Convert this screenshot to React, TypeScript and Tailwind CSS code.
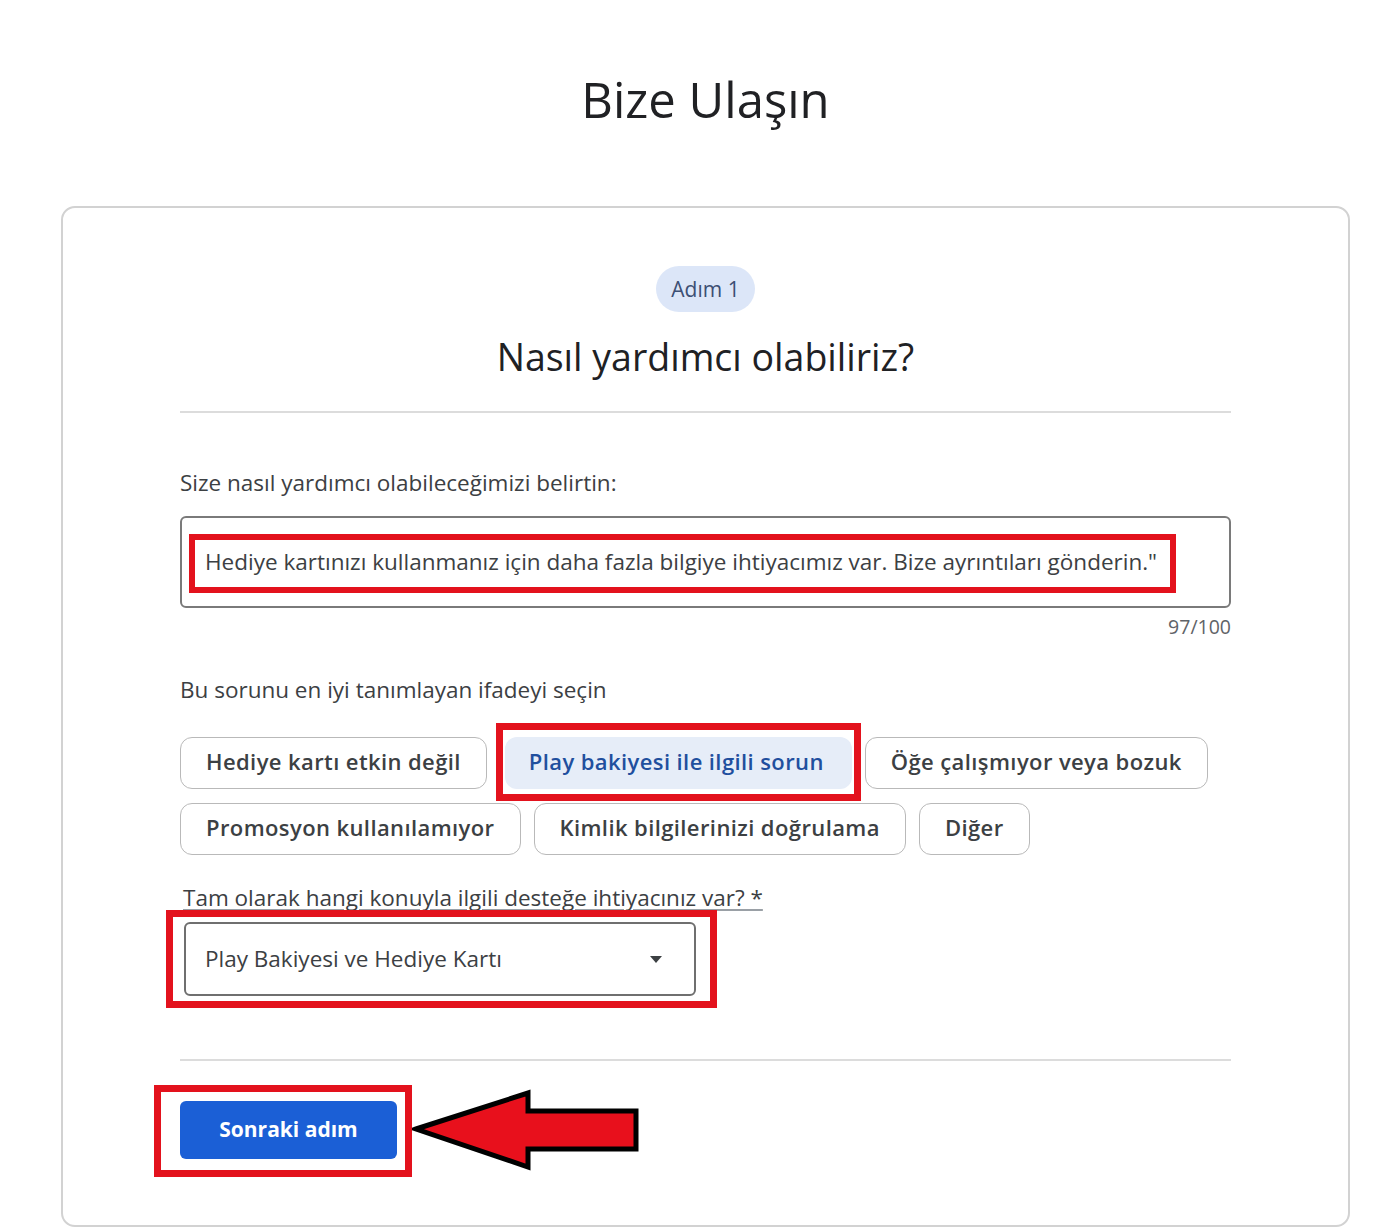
import React from "react";

const chipsTop = ["Hediye kartı etkin değil", "Play bakiyesi ile ilgili sorun", "Öğe çalışmıyor veya bozuk"];
const chipsBottom = ["Promosyon kullanılamıyor", "Kimlik bilgilerinizi doğrulama", "Diğer"];

function Chip({ label, selected }: { label: string; selected?: boolean }) {
  if (selected) {
    return (
      <div className="relative ml-[5px]">
        <div className="h-[52px] pl-[24px] pr-[28px] pb-[3px] flex items-center rounded-[12px] bg-[#e6edf8] text-[#1f4f9e] text-[22px] font-semibold tracking-[0.4px]">
          {label}
        </div>
        {/* highlight frame */}
        <div className="absolute -left-[9px] -right-[9px] -top-[14px] -bottom-[12px] border-[7px] border-[#e3121d] pointer-events-none" />
      </div>
    );
  }
  return (
    <div className="h-[52px] px-[25px] pb-[3px] flex items-center rounded-[12px] border-[1.5px] border-[#b9b9b9] bg-white text-[#3c4043] text-[22px] font-semibold tracking-[0.4px]">
      {label}
    </div>
  );
}

function Divider() {
  return <div className="h-[2px] bg-[#dcdcdc]" />;
}

export default function App() {
  return (
    <div className="min-h-[1232px] bg-white font-['Open_Sans',sans-serif] text-[#202124] pb-[6px]">
      <h1 className="ml-[61px] w-[1289px] pt-[69px] text-center text-[49px] leading-[60px] text-[#202124]">
        Bize Ulaşın
      </h1>

      <div className="ml-[61px] mt-[77px] w-[1289px] rounded-[14px] border-2 border-[#d2d2d2] px-[117px] pt-[58px] pb-[66px]">
        <div className="flex justify-center">
          <span className="h-[46px] px-[15px] rounded-full bg-[#dce6f8] text-[#3c4f74] text-[21px] leading-[46px]">
            Adım 1
          </span>
        </div>
        <h2 className="mt-[21px] text-center text-[37.5px] leading-[48px] text-[#202124]">
          Nasıl yardımcı olabiliriz?
        </h2>

        <div className="mt-[30px]">
          <Divider />
        </div>

        <p className="mt-[56px] text-[22.5px] leading-[28px] text-[#3c4043]">
          Size nasıl yardımcı olabileceğimizi belirtin:
        </p>

        <div className="relative mt-[19px] h-[92px] rounded-[6px] border-2 border-[#7a7a7a] flex items-center pl-[23px]">
          <span className="text-[22.5px] text-[#3c4043]">
            Hediye kartınızı kullanmanız için daha fazla bilgiye ihtiyacımız var. Bize ayrıntıları gönderin."
          </span>
          <div className="absolute left-[7px] top-[16px] w-[987px] h-[59px] border-[6px] border-[#e3121d] pointer-events-none" />
        </div>
        <div className="mt-[8px] text-right text-[19.5px] leading-[22px] text-[#5f6368]">97/100</div>

        <p className="mt-[38px] text-[22.5px] leading-[28px] text-[#3c4043]">
          Bu sorunu en iyi tanımlayan ifadeyi seçin
        </p>

        <div className="mt-[33px] flex flex-col gap-[14px]">
          <div className="flex gap-x-[13px]">
            {chipsTop.map((c, i) => (
              <Chip key={c} label={c} selected={i === 1} />
            ))}
          </div>
          <div className="flex gap-x-[13px]">
            {chipsBottom.map((c) => (
              <Chip key={c} label={c} />
            ))}
          </div>
        </div>

        <p className="mt-[29px] ml-[3px] text-[22.5px] leading-[28px] text-[#3c4043] underline decoration-[#9aa0a6] underline-offset-[3px]">
          Tam olarak hangi konuyla ilgili desteğe ihtiyacınız var? *
        </p>

        <div className="relative mt-[10px] ml-[4px] w-[512px]">
          <div className="h-[74px] rounded-[6px] border-2 border-[#6f6f6f] flex items-center justify-between pl-[19px] pr-[32px]">
            <span className="text-[22.5px] text-[#3c4043]">Play Bakiyesi ve Hediye Kartı</span>
            <svg width="12" height="7" viewBox="0 0 12 7">
              <path d="M0 0 L12 0 L6 7 Z" fill="#3c4043" />
            </svg>
          </div>
          <div className="absolute -left-[18px] -right-[21px] -top-[12px] -bottom-[12px] border-[7px] border-[#e3121d] pointer-events-none" />
        </div>

        <div className="mt-[63px]">
          <Divider />
        </div>

        <div className="mt-[40px] flex items-center">
          <div className="relative">
            <button className="h-[58px] w-[217px] rounded-[6px] bg-[#1b5fd6] text-white text-[21px] font-bold">
              Sonraki adım
            </button>
            <div className="absolute -left-[26px] -right-[15px] -top-[16px] -bottom-[18px] border-[7px] border-[#e3121d] pointer-events-none" />
          </div>
          <svg className="ml-[15px] -my-[12px]" width="230" height="82" viewBox="0 0 230 82">
            <polygon
              points="4,40 116,4 116,22 224,22 224,60 116,60 116,78"
              fill="#e8101c"
              stroke="#000"
              strokeWidth="5"
              strokeLinejoin="miter"
            />
          </svg>
        </div>
      </div>
    </div>
  );
}
